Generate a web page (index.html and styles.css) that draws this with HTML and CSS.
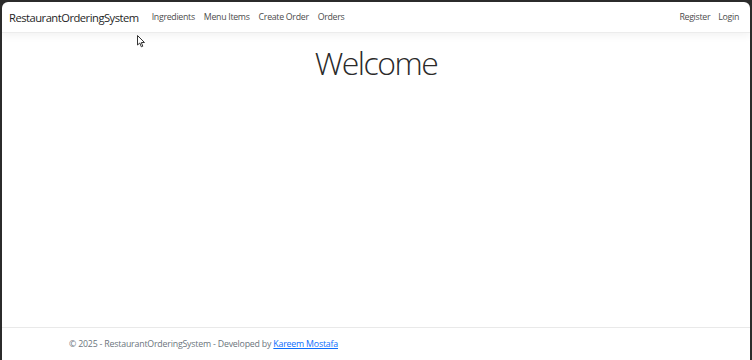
FILE: index.html
```html
<!DOCTYPE html>
<html lang="en">
<head>
<meta charset="utf-8">
<title>RestaurantOrderingSystem</title>
<link rel="stylesheet" href="styles.css">
</head>
<body>
<div class="window">
  <header class="navbar">
    <a class="brand" href="#">RestaurantOrderingSystem</a>
    <nav class="nav nav-main">
      <a href="#">Ingredients</a>
      <a href="#">Menu Items</a>
      <a href="#">Create Order</a>
      <a href="#">Orders</a>
    </nav>
    <nav class="nav nav-auth">
      <a href="#">Register</a>
      <a href="#">Login</a>
    </nav>
  </header>
  <main class="main">
    <h1 class="display">Welcome</h1>
  </main>
  <footer class="footer">
    <div class="footer-inner">© 2025 - RestaurantOrderingSystem - Developed by <a href="#">Kareem Mostafa</a></div>
  </footer>
  <svg class="cursor" width="9" height="13" viewBox="0 0 9 13"><path d="M0.5 0.5 L0.5 10 L2.8 8 L4.3 11.8 L5.8 11.2 L4.3 7.5 L7.5 7.5 Z" fill="#fff" stroke="#333" stroke-width="1"/></svg>
</div>
</body>
</html>
```
FILE: styles.css
```css
* { box-sizing: border-box; }
html, body { margin: 0; padding: 0; }
body {
  background: #2b2b2b;
  font-family: "Open Sans", "Noto Sans", sans-serif;
  width: 752px;
  height: 360px;
  overflow: hidden;
}
.window {
  position: relative;
  margin: 2px 2px 0 2px;
  height: 358px;
  background: #fff;
  border-radius: 6px 6px 0 0;
  display: flex;
  flex-direction: column;
  overflow: hidden;
}
.navbar {
  display: flex;
  align-items: center;
  height: 31px;
  padding: 0 11px 0 7px;
  border-bottom: 1px solid #ececec;
  box-shadow: 0 3px 8px rgba(0,0,0,0.05);
}
.brand {
  font-size: 11.2px;
  color: #1f1f1f;
  text-decoration: none;
  margin-right: 13px;
  letter-spacing: -0.5px;
}
.nav { display: flex; gap: 9px; }
.nav a {
  font-size: 8.8px;
  color: #4d4d4d;
  text-decoration: none;
  letter-spacing: -0.3px;
}
.nav-auth { margin-left: auto; gap: 8px; }
.main { flex: 1; }
.display {
  margin: 11px 0 0;
  text-align: center;
  font-weight: 300;
  font-size: 32px;
  letter-spacing: -1.5px;
  color: #2a2a2a;
  line-height: 1.2;
}
.footer {
  height: 33px;
  border-top: 1px solid #e9e9e9;
  display: flex;
  align-items: center;
}
.footer-inner {
  padding-left: 67px;
  font-size: 8.8px;
  color: #6c757d;
  letter-spacing: -0.2px;
}
.footer-inner a { color: #0d6efd; text-decoration: underline; }
.cursor { position: absolute; left: 135px; top: 33px; }
```
